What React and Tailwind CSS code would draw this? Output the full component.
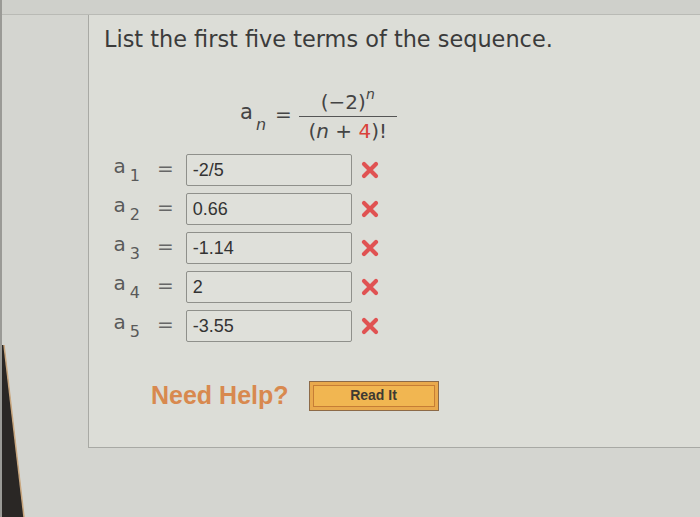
import React from "react";

const rows = [
  { n: "1", v: "-2/5" },
  { n: "2", v: "0.66" },
  { n: "3", v: "-1.14" },
  { n: "4", v: "2" },
  { n: "5", v: "-3.55" },
];

function XMark() {
  return (
    <svg width="18" height="18" viewBox="0 0 18 18" className="block">
      <path d="M3 3 L15 15 M15 3 L3 15" stroke="#e05252" strokeWidth="4.2" strokeLinecap="round" />
    </svg>
  );
}

export default function App() {
  const dv = { fontFamily: '"DejaVu Sans", Verdana, sans-serif' };
  const ar = { fontFamily: '"Liberation Sans", Arial, sans-serif' };
  return (
    <div className="relative w-[700px] h-[517px] overflow-hidden bg-[#d4d5d0]">
      <div className="h-[15px] bg-[#cfd0cb] border-b border-[#b9bab5]" />
      <div className="ml-[88px] h-[433px] border-l border-b border-[#a8a9a4] bg-[#dcddd7] flex flex-col">
        <div className="pl-[15px] pt-[10px] text-[22.4px] leading-[28px] text-[#3b3b3b]" style={dv}>
          List the first five terms of the sequence.
        </div>
        <div className="flex items-center pl-[151px] mt-[34px] text-[#444] h-[60px]" style={dv}>
          <span className="text-[21px] relative top-[-4px]">a</span>
          <span className="text-[16px] italic relative top-[8px] ml-[3px]">n</span>
          <span className="text-[20px] ml-[9px] mr-[7px] relative top-[-3px]">=</span>
          <div className="flex flex-col items-center">
            <div className="text-[20px] leading-[24px] px-[16px] pb-[2px] flex items-start">
              <span>(−2)</span>
              <span className="italic text-[14px] leading-[14px] relative top-[-3px]">n</span>
            </div>
            <div className="h-[1px] w-[98px] bg-[#555]" />
            <div className="text-[20px] leading-[26px] pt-[1px]">
              (<span className="italic">n</span> + <span className="text-[#d9423a]">4</span>)!
            </div>
          </div>
        </div>
        <div className="flex flex-col gap-[7px] mt-[7px]">
          {rows.map((r) => (
            <div key={r.n} className="flex items-center h-[32px]">
              <div className="w-[51px] flex justify-end items-center text-[#595959]" style={dv}>
                <span className="text-[20px] relative top-[-4px]">a</span>
                <span className="text-[16px] relative top-[6px] ml-[4px]">{r.n}</span>
              </div>
              <span className="ml-[17px] text-[20px] text-[#666] relative top-[-2px]" style={dv}>=</span>
              <div
                className="ml-[12px] w-[166px] h-[32px] border border-[#8f908b] rounded-[2px] bg-[#dfe0da] flex items-center pl-[6px] text-[18px] text-[#333]"
                style={ar}
              >
                {r.v}
              </div>
              <div className="ml-[9px]">
                <XMark />
              </div>
            </div>
          ))}
        </div>
        <div className="flex items-center mt-[35px] pl-[62px]">
          <span className="text-[25px] font-bold text-[#d8894f]" style={ar}>
            Need Help?
          </span>
          <div className="ml-[20px] w-[130px] h-[30px] border border-[#8c6a48] bg-[#e9a94c] p-[3px]">
            <div className="h-full border border-[#c67d35] bg-[#f1b651] flex items-center justify-center text-[14px] font-bold text-[#3d3a33]" style={ar}>
              Read It
            </div>
          </div>
        </div>
      </div>
      <svg className="absolute left-0 top-0" width="700" height="517" viewBox="0 0 700 517" style={{ pointerEvents: "none" }}>
        <polygon points="0,345 4,345 24,517 0,517" fill="#2a2725" />
        <line x1="4" y1="345" x2="24" y2="517" stroke="#c9a77f" strokeWidth="1.5" />
        <rect x="0" y="0" width="2" height="517" fill="#9a9a96" />
      </svg>
    </div>
  );
}
